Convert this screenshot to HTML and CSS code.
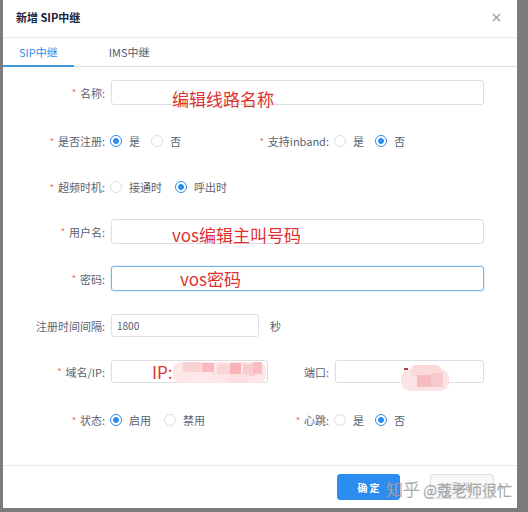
FILE: index.html
```html
<!DOCTYPE html>
<html lang="zh-CN">
<head>
<meta charset="utf-8">
<title>新增 SIP中继</title>
<link rel="stylesheet" href="styles.css">
</head>
<body>
<div class="dialog">
  <div class="dialog-header">
    <span class="dialog-title">新增 SIP中继</span>
    <span class="dialog-close">
      <svg width="9" height="9" viewBox="0 0 9 9"><path d="M1 1L8 8M8 1L1 8" stroke="#999" stroke-width="1.3" fill="none"/></svg>
    </span>
  </div>
  <div class="tabs">
    <div class="tab tab--active">SIP中继</div>
    <div class="tab">IMS中继</div>
  </div>
  <div class="form">
    <div class="row row--first">
      <div class="label req">名称:</div>
      <div class="input input--full"><span class="note note--name">编辑线路名称</span></div>
    </div>

    <div class="row row--radio">
      <div class="half">
        <div class="label req">是否注册:</div>
        <div class="radios">
          <span class="radio radio--on"><i class="radio-dot"></i>是</span>
          <span class="radio"><i class="radio-dot"></i>否</span>
        </div>
      </div>
      <div class="label label--right req">支持inband:</div>
      <div class="radios">
        <span class="radio"><i class="radio-dot"></i>是</span>
        <span class="radio radio--on"><i class="radio-dot"></i>否</span>
      </div>
    </div>

    <div class="row row--radio">
      <div class="label req">超频时机:</div>
      <div class="radios">
        <span class="radio radio--wide"><i class="radio-dot"></i>接通时</span>
        <span class="radio radio--on"><i class="radio-dot"></i>呼出时</span>
      </div>
    </div>

    <div class="row row--after-radio">
      <div class="label req">用户名:</div>
      <div class="input input--full"><span class="note note--user">vos编辑主叫号码</span></div>
    </div>

    <div class="row row--gap22">
      <div class="label req">密码:</div>
      <div class="input input--full input--focus"><span class="note note--pwd">vos密码</span></div>
    </div>

    <div class="row row--gap23">
      <div class="label">注册时间间隔:</div>
      <div class="input input--sm input--interval">1800</div>
      <span class="unit">秒</span>
    </div>

    <div class="row row--gap23">
      <div class="half">
        <div class="label req">域名/IP:</div>
        <div class="input input--sm input--ip">
          <span class="note note--ip">IP:</span>
          <svg class="mosaic mosaic--ip" width="97" height="25" viewBox="0 0 97 25">
            <rect x="4" y="2" width="93" height="21" rx="8" fill="#fce6e7"/>
            <rect x="14" y="2" width="18" height="10" fill="#f9d2d4"/>
            <rect x="33" y="3" width="12" height="11" fill="#f7b9bd"/>
            <rect x="48" y="4" width="14" height="10" fill="#fad5d7"/>
            <rect x="61" y="3" width="11" height="12" fill="#f6b3b8"/>
            <rect x="74" y="4" width="12" height="12" fill="#f9cdd0"/>
            <rect x="84" y="2" width="9" height="12" fill="#f7bec2"/>
            <rect x="20" y="12" width="24" height="10" fill="#fde9ea"/>
            <rect x="60" y="14" width="20" height="9" fill="#fbdfe1"/>
          </svg>
        </div>
      </div>
      <div class="label label--right">端口:</div>
      <div class="input input--sm input--port">
        <svg class="mosaic mosaic--port" width="48" height="26" viewBox="0 0 48 26">
          <rect x="0" y="4" width="48" height="22" rx="9" fill="#fce3e5"/>
          <rect x="10" y="0" width="30" height="12" rx="5" fill="#fbd9db"/>
          <rect x="16" y="10" width="14" height="12" fill="#f7bcc0"/>
          <rect x="30" y="8" width="12" height="14" fill="#f9cacd"/>
          <rect x="3" y="3" width="4" height="2" fill="#b53a3a"/>
        </svg>
      </div>
    </div>

    <div class="row row--radio row--last">
      <div class="half">
        <div class="label req">状态:</div>
        <div class="radios">
          <span class="radio radio--wide radio--on"><i class="radio-dot"></i>启用</span>
          <span class="radio"><i class="radio-dot"></i>禁用</span>
        </div>
      </div>
      <div class="label label--right req">心跳:</div>
      <div class="radios">
        <span class="radio"><i class="radio-dot"></i>是</span>
        <span class="radio radio--on"><i class="radio-dot"></i>否</span>
      </div>
    </div>
  </div>
  <div class="dialog-footer">
    <button class="btn btn--primary">确定</button>
    <button class="btn btn--default">取消</button>
    <div class="watermark"><span class="wm-big">知乎</span> @蔻老师很忙</div>
  </div>
</div>
</body>
</html>
```

FILE: styles.css
```css
* { box-sizing: border-box; }
html, body { margin: 0; padding: 0; }
body {
  width: 528px;
  height: 512px;
  overflow: hidden;
  background: #7b7b7b;
  font-family: "Noto Sans CJK SC", "Noto Sans", sans-serif;
  font-size: 11px;
  color: #515a6e;
}
.dialog {
  margin-left: 3px;
  width: 514px;
  height: 508px;
  background: #fff;
  display: flex;
  flex-direction: column;
}
.dialog-header {
  height: 38px;
  flex-shrink: 0;
  border-bottom: 1px solid #e8eaec;
  display: flex;
  align-items: center;
  justify-content: space-between;
  padding: 0 16px 3px 13px;
}
.dialog-title {
  font-size: 11px;
  font-weight: bold;
  color: #17233d;
}
.dialog-close { display: flex; }
.tabs {
  height: 29px;
  flex-shrink: 0;
  display: flex;
  border-bottom: 1px solid #dcdee2;
}
.tab {
  height: 29px;
  padding: 0 16px;
  margin-right: 19px;
  display: flex;
  align-items: center;
  border-bottom: 2px solid transparent;
  margin-bottom: -1px;
  color: #515a6e;
  padding-top: 1px;
}
.tab--active {
  color: #2d8cf0;
  border-bottom-color: #3e97d6;
}
.form {
  flex: 1;
  display: flex;
  flex-direction: column;
}
.row {
  display: flex;
  align-items: center;
  flex-shrink: 0;
}
.row--first { margin-top: 13px; }
.row--radio { height: 20px; margin-top: 26px; }
.row--after-radio { margin-top: 22px; }
.row--gap22 { margin-top: 22px; }
.row--gap23 { margin-top: 23px; }
.row--last { margin-top: 27px; }
.half {
  width: 266px;
  flex-shrink: 0;
  display: flex;
  align-items: center;
}
.label {
  width: 102px;
  flex-shrink: 0;
  margin-right: 6px;
  display: flex;
  justify-content: flex-end;
  align-items: center;
  white-space: nowrap;
  color: #5b6372;
}
.label--right { width: 60px; }
.req::before {
  content: "*";
  color: #ed6a3a;
  margin-right: 4px;
  font-size: 9px;
}
.radios {
  display: flex;
  align-items: center;
  margin-left: -1px;
}
.radio {
  display: flex;
  align-items: center;
  margin-right: 11px;
  color: #5b6372;
}
.radio--wide { margin-right: 13px; }
.radio-dot {
  width: 12px;
  height: 12px;
  border: 1px solid #dcdee2;
  border-radius: 50%;
  margin-right: 7px;
  background: #fff;
}
.radio--on .radio-dot {
  border-color: #2d8cf0;
  background: radial-gradient(circle, #2d8cf0 0 2.6px, #fff 3.2px);
}
.input {
  height: 25px;
  border: 1px solid #dcdee2;
  border-radius: 3px;
  position: relative;
  background: #fff;
  flex-shrink: 0;
}
.input--full { width: 373px; }
.input--sm { height: 23px; }
.input--focus {
  border-color: #7fb3e0;
  box-shadow: 0 0 0 1px rgba(45, 140, 240, 0.12);
}
.input--interval {
  width: 148px;
  display: flex;
  align-items: center;
  padding-left: 5px;
  font-size: 10px;
  color: #515a6e;
}
.input--ip { width: 157px; }
.input--port { width: 149px; }
.unit { margin-left: 11px; }
.note {
  position: absolute;
  color: #e0312f;
  font-size: 17px;
  line-height: 1;
  white-space: nowrap;
}
.note--name { left: 60px; top: 9px; }
.note--user { left: 60px; top: 6px; }
.note--pwd { left: 68px; top: 3px; }
.note--ip { left: 40px; top: 2px; }
.mosaic { position: absolute; }
.mosaic--ip { left: 57px; top: -1px; }
.mosaic--port { left: 65px; top: 4px; }
.dialog-footer {
  height: 43px;
  flex-shrink: 0;
  border-top: 1px solid #e8eaec;
  display: flex;
  justify-content: flex-end;
  align-items: flex-start;
  padding: 8px 23px 0 0;
  gap: 30px;
  position: relative;
}
.btn {
  font-family: "Noto Sans CJK SC", sans-serif;
  font-size: 10px;
  border-radius: 3px;
  height: 26px;
  padding: 0;
  cursor: pointer;
}
.btn--primary {
  width: 63px;
  background: #2d8cf0;
  border: 1px solid #2d8cf0;
  color: #fff;
  font-weight: bold;
  letter-spacing: 2px;
  text-indent: 2px;
}
.btn--default {
  width: 64px;
  height: 25px;
  background: #f8f8f9;
  border: 1px solid #dcdee2;
  color: #b8bcc4;
}
.watermark {
  position: absolute;
  left: 383px;
  top: 13px;
  font-size: 15px;
  font-weight: 300;
  line-height: 20px;
  white-space: nowrap;
  color: rgba(255, 255, 255, 0.85);
  -webkit-text-stroke: 0.5px rgba(120, 120, 120, 0.8);
}
.wm-big { font-size: 17px; }
```
